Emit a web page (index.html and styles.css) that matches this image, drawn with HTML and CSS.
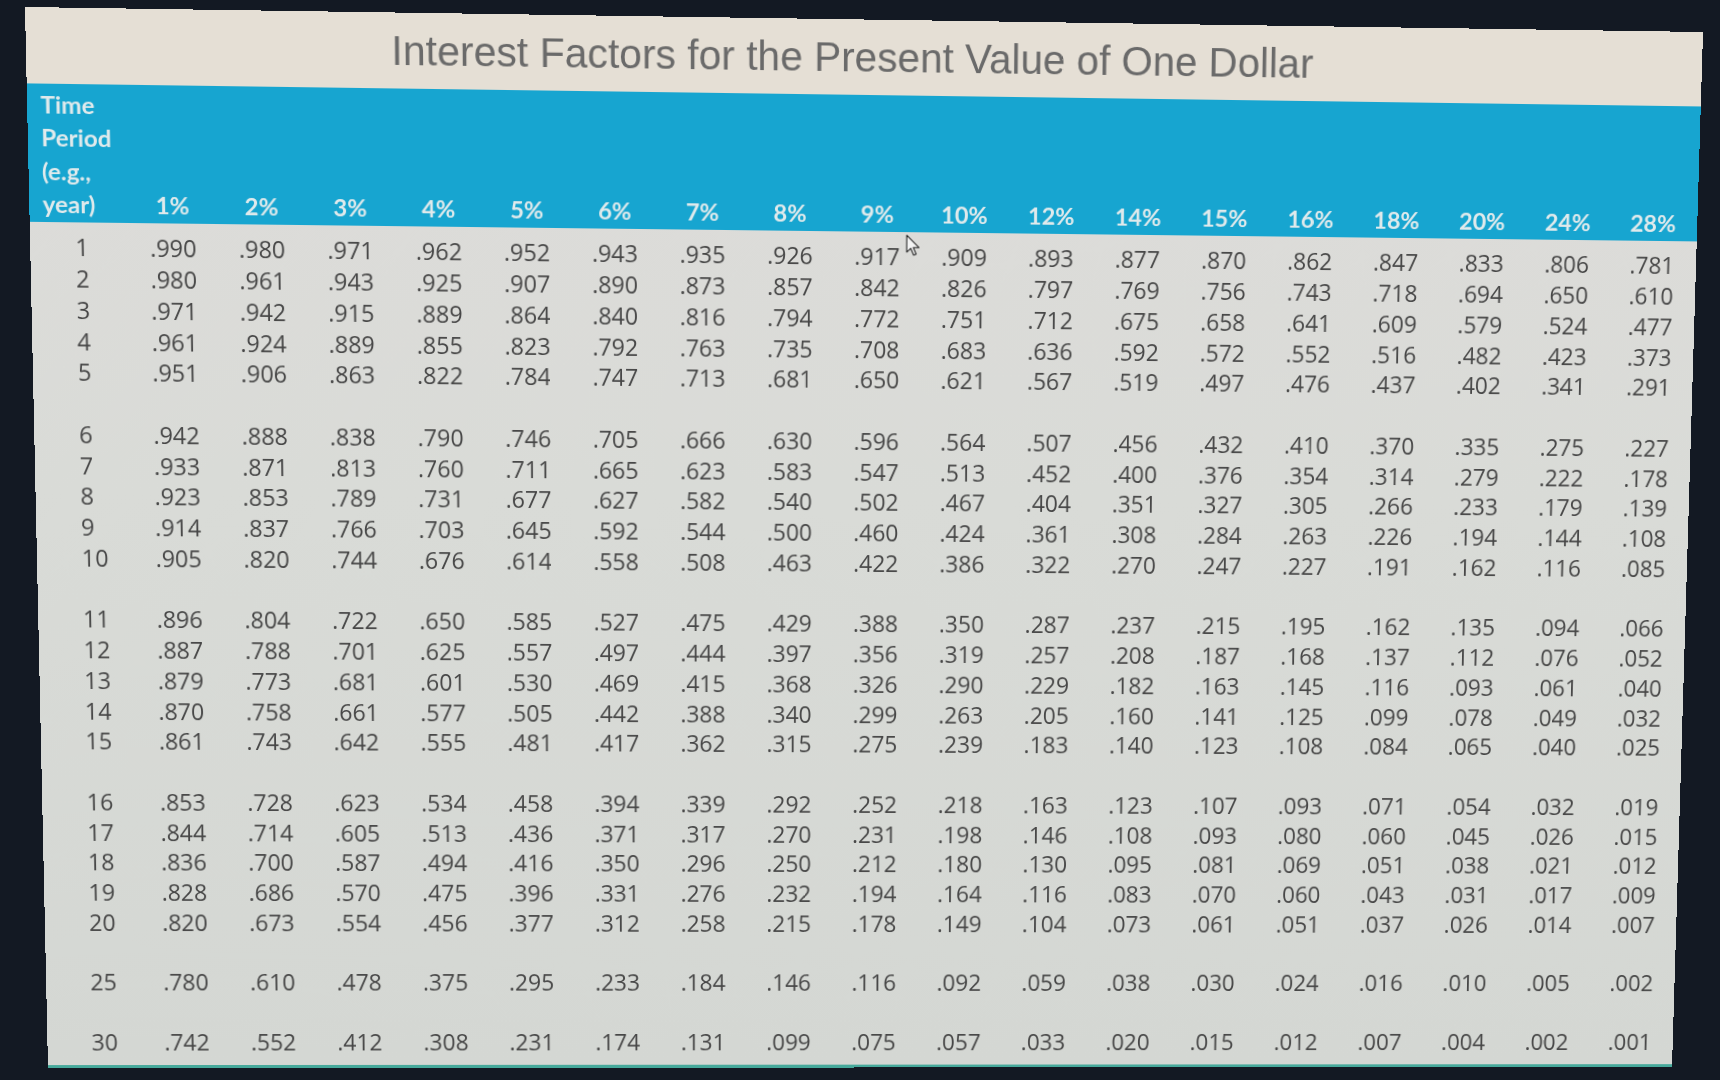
FILE: index.html
```html
<!DOCTYPE html>
<html lang="en">
<head>
<meta charset="utf-8">
<title>Interest Factors for the Present Value of One Dollar</title>
<link rel="stylesheet" href="styles.css">
</head>
<body>
<div class="screen">
  <h1 class="title">Interest Factors for the Present Value of One Dollar</h1>
  <div class="head">
    <div class="time-h">Time<br>Period<br>(e.g.,<br>year)</div>
    <span>1%</span><span>2%</span><span>3%</span><span>4%</span><span>5%</span><span>6%</span><span>7%</span><span>8%</span><span>9%</span><span>10%</span><span>12%</span><span>14%</span><span>15%</span><span>16%</span><span>18%</span><span>20%</span><span>24%</span><span>28%</span>
  </div>
  <div class="body">
    <div class="group">
      <div class="row"><span>1</span><span>.990</span><span>.980</span><span>.971</span><span>.962</span><span>.952</span><span>.943</span><span>.935</span><span>.926</span><span>.917</span><span>.909</span><span>.893</span><span>.877</span><span>.870</span><span>.862</span><span>.847</span><span>.833</span><span>.806</span><span>.781</span></div>
      <div class="row"><span>2</span><span>.980</span><span>.961</span><span>.943</span><span>.925</span><span>.907</span><span>.890</span><span>.873</span><span>.857</span><span>.842</span><span>.826</span><span>.797</span><span>.769</span><span>.756</span><span>.743</span><span>.718</span><span>.694</span><span>.650</span><span>.610</span></div>
      <div class="row"><span>3</span><span>.971</span><span>.942</span><span>.915</span><span>.889</span><span>.864</span><span>.840</span><span>.816</span><span>.794</span><span>.772</span><span>.751</span><span>.712</span><span>.675</span><span>.658</span><span>.641</span><span>.609</span><span>.579</span><span>.524</span><span>.477</span></div>
      <div class="row"><span>4</span><span>.961</span><span>.924</span><span>.889</span><span>.855</span><span>.823</span><span>.792</span><span>.763</span><span>.735</span><span>.708</span><span>.683</span><span>.636</span><span>.592</span><span>.572</span><span>.552</span><span>.516</span><span>.482</span><span>.423</span><span>.373</span></div>
      <div class="row"><span>5</span><span>.951</span><span>.906</span><span>.863</span><span>.822</span><span>.784</span><span>.747</span><span>.713</span><span>.681</span><span>.650</span><span>.621</span><span>.567</span><span>.519</span><span>.497</span><span>.476</span><span>.437</span><span>.402</span><span>.341</span><span>.291</span></div>
    </div>
    <div class="group">
      <div class="row"><span>6</span><span>.942</span><span>.888</span><span>.838</span><span>.790</span><span>.746</span><span>.705</span><span>.666</span><span>.630</span><span>.596</span><span>.564</span><span>.507</span><span>.456</span><span>.432</span><span>.410</span><span>.370</span><span>.335</span><span>.275</span><span>.227</span></div>
      <div class="row"><span>7</span><span>.933</span><span>.871</span><span>.813</span><span>.760</span><span>.711</span><span>.665</span><span>.623</span><span>.583</span><span>.547</span><span>.513</span><span>.452</span><span>.400</span><span>.376</span><span>.354</span><span>.314</span><span>.279</span><span>.222</span><span>.178</span></div>
      <div class="row"><span>8</span><span>.923</span><span>.853</span><span>.789</span><span>.731</span><span>.677</span><span>.627</span><span>.582</span><span>.540</span><span>.502</span><span>.467</span><span>.404</span><span>.351</span><span>.327</span><span>.305</span><span>.266</span><span>.233</span><span>.179</span><span>.139</span></div>
      <div class="row"><span>9</span><span>.914</span><span>.837</span><span>.766</span><span>.703</span><span>.645</span><span>.592</span><span>.544</span><span>.500</span><span>.460</span><span>.424</span><span>.361</span><span>.308</span><span>.284</span><span>.263</span><span>.226</span><span>.194</span><span>.144</span><span>.108</span></div>
      <div class="row"><span>10</span><span>.905</span><span>.820</span><span>.744</span><span>.676</span><span>.614</span><span>.558</span><span>.508</span><span>.463</span><span>.422</span><span>.386</span><span>.322</span><span>.270</span><span>.247</span><span>.227</span><span>.191</span><span>.162</span><span>.116</span><span>.085</span></div>
    </div>
    <div class="group">
      <div class="row"><span>11</span><span>.896</span><span>.804</span><span>.722</span><span>.650</span><span>.585</span><span>.527</span><span>.475</span><span>.429</span><span>.388</span><span>.350</span><span>.287</span><span>.237</span><span>.215</span><span>.195</span><span>.162</span><span>.135</span><span>.094</span><span>.066</span></div>
      <div class="row"><span>12</span><span>.887</span><span>.788</span><span>.701</span><span>.625</span><span>.557</span><span>.497</span><span>.444</span><span>.397</span><span>.356</span><span>.319</span><span>.257</span><span>.208</span><span>.187</span><span>.168</span><span>.137</span><span>.112</span><span>.076</span><span>.052</span></div>
      <div class="row"><span>13</span><span>.879</span><span>.773</span><span>.681</span><span>.601</span><span>.530</span><span>.469</span><span>.415</span><span>.368</span><span>.326</span><span>.290</span><span>.229</span><span>.182</span><span>.163</span><span>.145</span><span>.116</span><span>.093</span><span>.061</span><span>.040</span></div>
      <div class="row"><span>14</span><span>.870</span><span>.758</span><span>.661</span><span>.577</span><span>.505</span><span>.442</span><span>.388</span><span>.340</span><span>.299</span><span>.263</span><span>.205</span><span>.160</span><span>.141</span><span>.125</span><span>.099</span><span>.078</span><span>.049</span><span>.032</span></div>
      <div class="row"><span>15</span><span>.861</span><span>.743</span><span>.642</span><span>.555</span><span>.481</span><span>.417</span><span>.362</span><span>.315</span><span>.275</span><span>.239</span><span>.183</span><span>.140</span><span>.123</span><span>.108</span><span>.084</span><span>.065</span><span>.040</span><span>.025</span></div>
    </div>
    <div class="group">
      <div class="row"><span>16</span><span>.853</span><span>.728</span><span>.623</span><span>.534</span><span>.458</span><span>.394</span><span>.339</span><span>.292</span><span>.252</span><span>.218</span><span>.163</span><span>.123</span><span>.107</span><span>.093</span><span>.071</span><span>.054</span><span>.032</span><span>.019</span></div>
      <div class="row"><span>17</span><span>.844</span><span>.714</span><span>.605</span><span>.513</span><span>.436</span><span>.371</span><span>.317</span><span>.270</span><span>.231</span><span>.198</span><span>.146</span><span>.108</span><span>.093</span><span>.080</span><span>.060</span><span>.045</span><span>.026</span><span>.015</span></div>
      <div class="row"><span>18</span><span>.836</span><span>.700</span><span>.587</span><span>.494</span><span>.416</span><span>.350</span><span>.296</span><span>.250</span><span>.212</span><span>.180</span><span>.130</span><span>.095</span><span>.081</span><span>.069</span><span>.051</span><span>.038</span><span>.021</span><span>.012</span></div>
      <div class="row"><span>19</span><span>.828</span><span>.686</span><span>.570</span><span>.475</span><span>.396</span><span>.331</span><span>.276</span><span>.232</span><span>.194</span><span>.164</span><span>.116</span><span>.083</span><span>.070</span><span>.060</span><span>.043</span><span>.031</span><span>.017</span><span>.009</span></div>
      <div class="row"><span>20</span><span>.820</span><span>.673</span><span>.554</span><span>.456</span><span>.377</span><span>.312</span><span>.258</span><span>.215</span><span>.178</span><span>.149</span><span>.104</span><span>.073</span><span>.061</span><span>.051</span><span>.037</span><span>.026</span><span>.014</span><span>.007</span></div>
    </div>
    <div class="group">
      <div class="row"><span>25</span><span>.780</span><span>.610</span><span>.478</span><span>.375</span><span>.295</span><span>.233</span><span>.184</span><span>.146</span><span>.116</span><span>.092</span><span>.059</span><span>.038</span><span>.030</span><span>.024</span><span>.016</span><span>.010</span><span>.005</span><span>.002</span></div>
    </div>
    <div class="group">
      <div class="row"><span>30</span><span>.742</span><span>.552</span><span>.412</span><span>.308</span><span>.231</span><span>.174</span><span>.131</span><span>.099</span><span>.075</span><span>.057</span><span>.033</span><span>.020</span><span>.015</span><span>.012</span><span>.007</span><span>.004</span><span>.002</span><span>.001</span></div>
    </div>
  </div>
  <svg class="cursor" viewBox="0 0 14 21" width="15" height="22" aria-hidden="true">
    <path d="M1 1 L1 17 L4.8 13.4 L7.6 19.8 L10 18.8 L7.3 12.6 L12.6 12.6 Z" fill="#f4f4f4" stroke="#222" stroke-width="1" stroke-linejoin="round"/>
  </svg>
</div>
</body>
</html>
```
FILE: styles.css
```css
html {
  background: #131923;
}

body {
  margin: 0;
  width: 1720px;
  height: 1080px;
  overflow: hidden;
  background: #131923;
}

.screen {
  position: relative;
  width: 1660px;
  height: 1060px;
  overflow: hidden;
  background: linear-gradient(180deg, #dedcda 0%, #d9dbd7 45%, #d4d7d3 100%);
  border-bottom: 3px solid #46a99b;
  box-sizing: border-box;
  transform-origin: 0 0;
  transform: matrix3d(1.036648, 0.015545, 0, 0.00001515, 0.023225, 1.034929, 0, 0.00003182, 0, 0, 1, 0, 25, 7, 0, 1);
}

.title {
  margin: 0;
  height: 74px;
  padding-left: 355px;
  background: #e5dfd5;
  color: #6a6a6a;
  font-family: "Liberation Sans", Arial, sans-serif;
  font-weight: 400;
  font-size: 40.2px;
  line-height: 76px;
  white-space: nowrap;
}

.head {
  display: grid;
  grid-template-columns: 96px repeat(18, 86.8px);
  align-items: end;
  height: 135px;
  padding-top: 4px;
  padding-bottom: 2px;
  box-sizing: border-box;
  background: #17a5d0;
  color: #e0eaec;
  font-family: Lato, "Open Sans", sans-serif;
  font-weight: 700;
  font-size: 23.5px;
  line-height: 32.2px;
}

.head span {
  text-align: center;
}

.time-h {
  padding-left: 13px;
  text-align: left;
  white-space: nowrap;
}

.body {
  display: flex;
  flex-direction: column;
  gap: 30.75px;
  padding-top: 9.3px;
}

.row {
  display: grid;
  grid-template-columns: 96px repeat(18, 86.8px);
  height: 30.75px;
  color: #474747;
  font-family: "Open Sans", "Noto Sans", sans-serif;
  font-size: 23px;
  line-height: 30.75px;
}

.row span {
  text-align: center;
}

.row span:first-child {
  padding-left: 44px;
  text-align: left;
}

.cursor {
  position: absolute;
  left: 862px;
  top: 211px;
}
```
